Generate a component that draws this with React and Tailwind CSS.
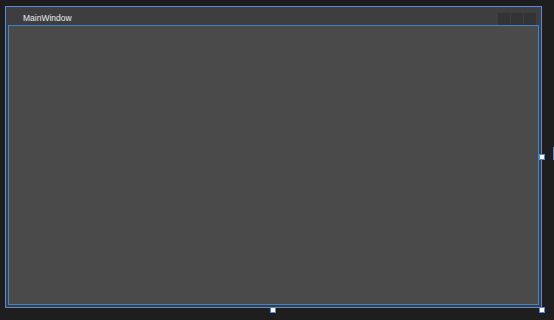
const Handle = ({ className }) => (
  <div
    className={`absolute w-[6px] h-[6px] bg-white border border-[#5b86d6] ${className}`}
  />
);

export default function App() {
  return (
    <div className="relative w-[554px] h-[320px] bg-[#1e1e1e] overflow-hidden pt-[6px] pl-[5px] font-['Liberation_Sans',Arial,sans-serif]">
      <div className="w-[537px] h-[302px] border border-[#5a87d8] bg-[#3e3e40] flex flex-col">
        <div className="h-[18px] flex items-center justify-between pl-[17px] pr-[5px] shrink-0">
          <span className="text-[8.5px] text-[#ececec] leading-none mt-[5px]">MainWindow</span>
          <div className="flex gap-[1px] mt-[6px]">
            <div className="w-[12px] h-[12px] bg-[#333335]" />
            <div className="w-[12px] h-[12px] bg-[#333335]" />
            <div className="w-[12px] h-[12px] bg-[#333335]" />
          </div>
        </div>
        <div className="flex-1 mx-[2px] mb-[2px] border border-[#3a86c8] bg-[#4a4a4a]" />
      </div>
      <Handle className="left-[539px] top-[154px]" />
      <Handle className="left-[270px] top-[307px]" />
      <Handle className="left-[539px] top-[307px]" />
      <div className="absolute left-[553px] top-[147px] w-[1px] h-[13px] bg-[#5a87d8]" />
    </div>
  );
}
